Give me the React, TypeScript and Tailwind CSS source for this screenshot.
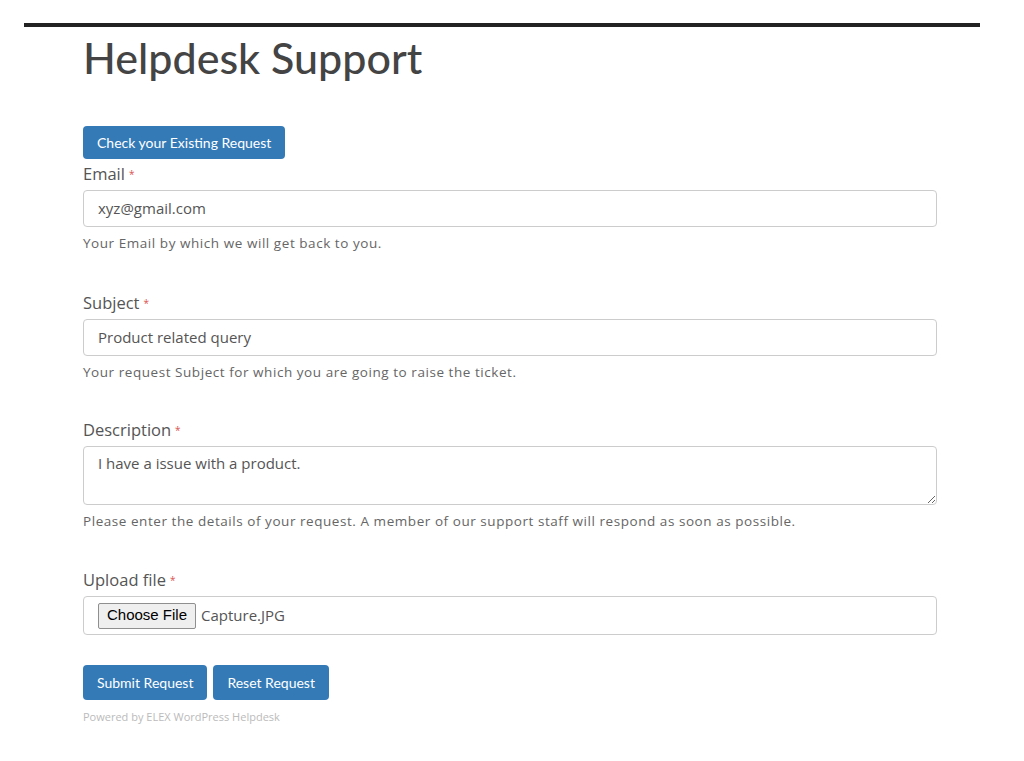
import { ReactNode } from 'react';

const field = "font-['Open_Sans','Liberation_Sans',sans-serif]";

function Label({ children }: { children: ReactNode }) {
  return (
    <label className={`${field} block text-[16.5px] leading-[22px] text-[#555]`}>
      {children}
      <span className="ml-1 align-top text-[10px] text-[#d9534f]">*</span>
    </label>
  );
}

function Help({ children }: { children: ReactNode }) {
  return (
    <p className={`${field} mt-[7px] text-[13.5px] leading-[18px] tracking-[0.55px] text-[#666]`}>{children}</p>
  );
}

export default function App() {
  return (
    <div className="min-h-screen bg-white font-['Lato','Liberation_Sans',sans-serif]">
      <div className="px-[24px] pt-[23px] pr-[44px]">
        <div className="h-[4px] bg-[#222]" />
      </div>

      <div className="ml-[83px] w-[854px]">
        <h1 className="mt-[6px] text-[43px] font-medium leading-[50px] text-[#444]">Helpdesk Support</h1>

        <button className="mt-[43px] h-[33px] rounded bg-[#337ab7] px-[14px] text-[14px] text-white">
          Check your Existing Request
        </button>

        <div className="mt-[4px]">
          <Label>Email</Label>
          <div className={`${field} mt-[5px] flex h-[37px] items-center rounded border border-[#ccc] px-[14px] text-[15px] text-[#555]`}>
            xyz@gmail.com
          </div>
          <Help>Your Email by which we will get back to you.</Help>
        </div>

        <div className="mt-[40px]">
          <Label>Subject</Label>
          <div className={`${field} mt-[5px] flex h-[37px] items-center rounded border border-[#ccc] px-[14px] text-[15px] text-[#555]`}>
            Product related query
          </div>
          <Help>Your request Subject for which you are going to raise the ticket.</Help>
        </div>

        <div className="mt-[38px]">
          <Label>Description</Label>
          <textarea
            readOnly
            defaultValue="I have a issue with a product."
            className={`${field} mt-[5px] block h-[59px] w-full resize-y rounded border border-[#ccc] px-[14px] py-[5px] text-[15px] text-[#555] outline-none`}
          />
          <Help>Please enter the details of your request. A member of our support staff will respond as soon as possible.</Help>
        </div>

        <div className="mt-[39px]">
          <Label>Upload file</Label>
          <div className={`${field} mt-[5px] flex h-[39px] items-center rounded border border-[#ccc] px-[14px] text-[15px] text-[#555]`}>
            <span className="flex h-[26px] items-center rounded-[2px] border border-[#8f8f8f] bg-[#efefef] px-[8px] font-['Liberation_Sans',sans-serif] text-[15px] text-black">
              Choose File
            </span>
            <span className="ml-[5px]">Capture.JPG</span>
          </div>
        </div>

        <div className="mt-[30px] flex gap-[6px]">
          <button className="h-[35px] rounded bg-[#337ab7] px-[14px] text-[14px] text-white">Submit Request</button>
          <button className="h-[35px] rounded bg-[#337ab7] px-[14px] text-[14px] text-white">Reset Request</button>
        </div>

        <p className={`${field} mt-[9px] text-[11px] text-[#bbb]`}>Powered by ELEX WordPress Helpdesk</p>
      </div>
    </div>
  );
}
